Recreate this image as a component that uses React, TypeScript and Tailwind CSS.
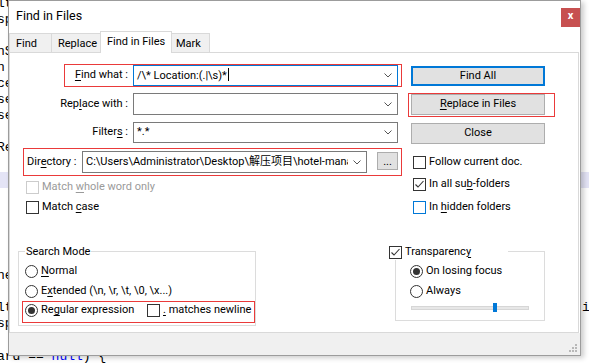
import React from 'react';

const codeLines = [
  'lt = r;',
  'sp',
  '',
  'nS',
  'n',
  'ce',
  'se',
  'se',
  '',
  'Re',
  '',
  '',
  '',
  '',
  '',
  '',
  '',
  'ne',
  '',
  'lt' + ' '.repeat(73) + 'ic',
  'sp',
  '',
];

function U({ c }: { c: string }) {
  return <span className="underline decoration-1 underline-offset-2">{c}</span>;
}

function Check({ checked, disabled, blue }: { checked?: boolean; disabled?: boolean; blue?: boolean }) {
  const border = disabled ? 'border-[#cccccc]' : blue ? 'border-[#0078d7]' : 'border-[#333333]';
  return (
    <span className={`flex h-[13px] w-[13px] shrink-0 items-center justify-center border bg-white ${border}`}>
      {checked && (
        <svg width="11" height="11" viewBox="0 0 11 11">
          <path d="M1.5 5.5 L4 8 L9.5 2" fill="none" stroke="#333" strokeWidth="1.1" />
        </svg>
      )}
    </span>
  );
}

function Radio({ on }: { on?: boolean }) {
  return (
    <span className="flex h-[13px] w-[13px] shrink-0 items-center justify-center rounded-full border border-[#333333] bg-white">
      {on && <span className="h-[7px] w-[7px] rounded-full bg-[#333333]" />}
    </span>
  );
}

function Chevron() {
  return (
    <svg width="8" height="5" viewBox="0 0 8 5" className="ml-[5px] shrink-0">
      <path d="M0.5 0.5 L4 4 L7.5 0.5" fill="none" stroke="#555" strokeWidth="1" />
    </svg>
  );
}

function Combo({ className, focused, children }: { className: string; focused?: boolean; children?: React.ReactNode }) {
  return (
    <div
      className={`flex shrink-0 items-center border bg-white pl-[2px] pr-[5px] ${focused ? 'border-[#0078d7]' : 'border-[#7a7a7a]'} ${className}`}
    >
      <div className="min-w-0 flex-1 overflow-hidden whitespace-nowrap">{children}</div>
      <Chevron />
    </div>
  );
}

function Btn({ className, children }: { className: string; children: React.ReactNode }) {
  return (
    <div className={`flex w-[134px] shrink-0 items-center justify-center bg-[#e1e1e1] ${className}`}>{children}</div>
  );
}

export default function App() {
  return (
    <div className="relative h-[364px] w-[589px] overflow-hidden bg-white">
      {/* editor behind the dialog */}
      <div className="-ml-[3px] -mt-[4px] flex flex-col font-['Liberation_Mono',monospace] text-[13px] text-black">
        {codeLines.map((line, i) => (
          <div key={i} className={`h-[16px] whitespace-pre leading-[16px] ${i === 11 ? 'bg-[#e4e4f6]' : ''}`}>
            {line}
          </div>
        ))}
        <div className="mt-[1px] h-[16px] whitespace-pre leading-[16px]">
          ard == <span className="text-[#0000ff]">null</span>) {'{'}
        </div>
      </div>

      {/* dialog */}
      <div className="absolute left-[8px] top-0 flex h-[356px] w-[573px] flex-col border border-[#9c9c9c] bg-white font-['Roboto','Noto_Sans_CJK_SC',sans-serif] text-[11px] text-black shadow-[3px_2px_5px_rgba(0,0,0,0.2)]">
        {/* title bar */}
        <div className="flex h-[30px] shrink-0 items-start">
          <div className="flex h-[31px] items-center pl-[7px] text-[12.5px]">Find in Files</div>
          <div className="ml-auto mt-[7px] flex h-[19px] w-[19px] items-center justify-center bg-[#c75050] pb-[2px] text-[11px] font-bold text-white">
            x
          </div>
        </div>

        {/* tabs */}
        <div className="flex h-[21px] shrink-0 items-end">
          <div className="flex h-[19px] w-[43px] items-center border border-b-0 border-[#d9d9d9] bg-[#f0f0f0] pl-[6px] pt-[2px]">Find</div>
          <div className="-ml-px flex h-[19px] w-[50px] items-center border border-b-0 border-[#d9d9d9] bg-[#f0f0f0] pl-[6px] pt-[2px]">Replace</div>
          <div className="relative z-10 -mb-px -ml-px flex h-[22px] w-[72px] items-center border border-b-0 border-[#d9d9d9] bg-white pl-[6px]">Find in Files</div>
          <div className="-ml-px flex h-[19px] w-[39px] items-center border border-b-0 border-[#d9d9d9] bg-[#f0f0f0] pl-[4px] pt-[2px]">Mark</div>
        </div>

        {/* panel */}
        <div className="flex h-[281px] w-[570px] shrink-0 flex-col border border-[#d9d9d9]">
          <div className="flex h-[198px] shrink-0 items-start">
            {/* left column */}
            <div className="ml-[13px] flex w-[379px] flex-col pt-[11px]">
              <div className="ml-[41px] flex h-[23px] w-[338px] items-start border border-[#ea3a3a] pr-[3px]">
                <div className="flex h-[21px] w-[63px] items-center justify-end whitespace-nowrap">
                  <U c="F" />ind what :
                </div>
                <Combo className="ml-[5px] h-[21px] w-[265px]" focused>
                  <span className="pl-[1px]">{'/\\* Location:(.|\\s)*'}</span>
                  <span className="ml-[1px] inline-block h-[13px] w-px translate-y-[2px] bg-black" />
                </Combo>
              </div>

              <div className="mt-[6px] flex h-[22px] items-center">
                <div className="w-[105px] whitespace-nowrap text-right">
                  Rep<U c="l" />ace with :
                </div>
                <Combo className="ml-[5px] h-[22px] w-[265px]" />
              </div>

              <div className="mt-[7px] flex h-[21px] items-center">
                <div className="w-[105px] whitespace-nowrap text-right">
                  Filter<U c="s" /> :
                </div>
                <Combo className="ml-[5px] h-[21px] w-[265px]">
                  <span className="pl-[1px]">*.*</span>
                </Combo>
              </div>

              <div className="mt-[5px] flex h-[28px] w-[379px] items-start border border-[#ea3a3a] pl-[3px] pr-[3px] pt-[2px]">
                <div className="flex h-[22px] w-[55px] items-center whitespace-nowrap">
                  Dir<U c="e" />ctory :
                </div>
                <Combo className="h-[22px] w-[285px]">
                  <span className="pl-[1px]">C:\Users\Administrator\Desktop\解压项目\hotel-management</span>
                </Combo>
                <div className="ml-[10px] mt-[1px] flex h-[18px] w-[21px] items-end justify-center border border-[#adadad] bg-[#e1e1e1] pb-[2px] leading-none">
                  ...
                </div>
              </div>

              <div className="ml-[3px] mt-[5px] flex h-[13px] items-center gap-[3px] text-[#9a9a9a]">
                <Check disabled />
                <span className="whitespace-nowrap">
                  Match <U c="w" />hole word only
                </span>
              </div>
              <div className="ml-[3px] mt-[7px] flex h-[13px] items-center gap-[3px]">
                <Check />
                <span className="whitespace-nowrap">
                  Match <U c="c" />ase
                </span>
              </div>
            </div>

            {/* right column */}
            <div className="ml-[6px] flex w-[147px] flex-col pt-[13px]">
              <Btn className="ml-[3px] h-[20px] border-2 border-[#0078d7]">Find All</Btn>
              <div className="mt-[7px] flex h-[24px] w-[147px] items-start border border-[#ea3a3a] pl-[2px]">
                <Btn className="h-[21px] border border-[#adadad]">
                  <span>
                    <U c="R" />eplace in Files
                  </span>
                </Btn>
              </div>
              <Btn className="ml-[3px] mt-[6px] h-[21px] border border-[#adadad]">Close</Btn>

              <div className="ml-[5px] mt-[12px] flex h-[13px] items-center gap-[3px]">
                <Check />
                <span className="whitespace-nowrap">Follow current doc.</span>
              </div>
              <div className="ml-[5px] mt-[9px] flex h-[13px] items-center gap-[3px]">
                <Check checked />
                <span className="whitespace-nowrap">
                  In all su<U c="b" />-folders
                </span>
              </div>
              <div className="ml-[5px] mt-[10px] flex h-[13px] items-center gap-[3px]">
                <Check blue />
                <span className="whitespace-nowrap">
                  In <U c="h" />idden folders
                </span>
              </div>
            </div>
          </div>

          {/* group boxes */}
          <div className="flex items-start">
            <div className="ml-[8px] flex h-[75px] w-[238px] flex-col border border-[#dcdcdc]">
              <div className="-mt-[8px] ml-[6px] h-[16px] w-fit bg-white px-[1px] leading-[16px]">Search Mode</div>
              <div className="ml-[6px] mt-[5px] flex h-[13px] items-center gap-[3px]">
                <Radio />
                <span>
                  <U c="N" />ormal
                </span>
              </div>
              <div className="ml-[6px] mt-[7px] flex h-[13px] items-center gap-[3px]">
                <Radio />
                <span className="whitespace-nowrap">
                  E<U c="x" />tended {'(\\n, \\r, \\t, \\0, \\x...)'}
                </span>
              </div>
              <div className="ml-[3px] mt-[3px] flex h-[22px] w-[233px] items-start border border-[#ea3a3a] pl-[2px] pt-[2px]">
                <div className="flex h-[13px] w-[122px] items-center gap-[3px]">
                  <Radio on />
                  <span className="whitespace-nowrap">
                    Re<U c="g" />ular expression
                  </span>
                </div>
                <div className="flex h-[13px] items-center gap-[3px]">
                  <Check />
                  <span className="whitespace-nowrap">
                    <U c="." /> matches newline
                  </span>
                </div>
              </div>
            </div>

            <div className="ml-[139px] flex h-[70px] w-[150px] flex-col border border-[#dcdcdc]">
              <div className="-ml-[7px] -mt-[8px] flex h-[16px] w-[119px] items-center gap-[3px] bg-white">
                <Check checked />
                <span>
                  Transparenc<U c="y" />
                </span>
              </div>
              <div className="ml-[14px] mt-[5px] flex h-[13px] items-center gap-[3px]">
                <Radio on />
                <span className="whitespace-nowrap">On losing focus</span>
              </div>
              <div className="ml-[14px] mt-[7px] flex h-[13px] items-center gap-[3px]">
                <Radio />
                <span>Always</span>
              </div>
              <div className="relative ml-[15px] mt-[5px] flex h-[9px] w-[118px] items-center">
                <div className="h-[4px] w-full border border-[#d6d6d6] bg-[#e7e7e7]" />
                <div className="absolute left-[82px] top-0 h-[9px] w-[4px] bg-[#0078d7]" />
              </div>
            </div>
          </div>
        </div>

        {/* status bar */}
        <div className="relative flex flex-1 justify-end bg-[#f0f0f0]">
          <svg width="9" height="9" viewBox="0 0 9 9" className="mb-[2px] mr-[2px] self-end">
            <rect x="6" y="0" width="2" height="2" fill="#b8b8b8" />
            <rect x="3" y="3" width="2" height="2" fill="#b8b8b8" />
            <rect x="6" y="3" width="2" height="2" fill="#b8b8b8" />
            <rect x="0" y="6" width="2" height="2" fill="#b8b8b8" />
            <rect x="3" y="6" width="2" height="2" fill="#b8b8b8" />
            <rect x="6" y="6" width="2" height="2" fill="#b8b8b8" />
          </svg>
        </div>
      </div>
    </div>
  );
}
